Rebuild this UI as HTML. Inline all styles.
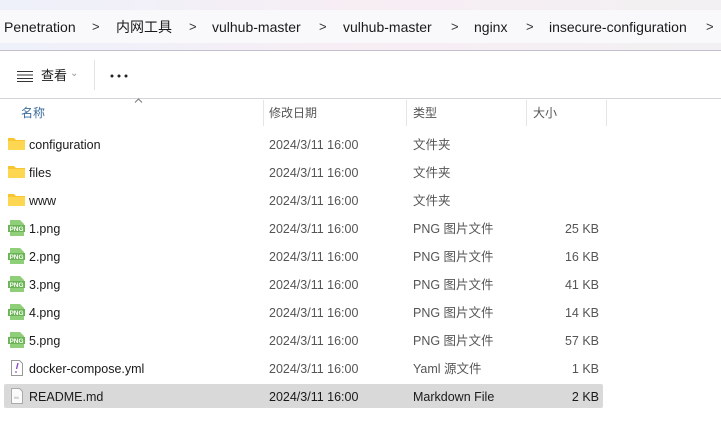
<!DOCTYPE html>
<html><head><meta charset="utf-8"><style>
*{margin:0;padding:0;box-sizing:border-box}
body{width:721px;height:439px;overflow:hidden;background:#fff;font-family:"Liberation Sans","Noto Sans CJK SC",sans-serif;position:relative;color:#1a1a1a}
span{line-height:16px}
.top{position:absolute;left:0;top:0;width:721px;height:51px;background:linear-gradient(90deg,#eef1fa,#f7eef4 50%,#f2f0f2);border-bottom:1px solid #c3bfcc}
.bar{position:absolute;left:0;top:10px;width:721px;height:33px;background:#f9f9fb;font-size:14px;color:#1a1a1a}
.bar span{position:absolute;top:9px;white-space:nowrap}
.bar .c{font-size:13px;color:#333}
.tb{position:absolute;left:0;top:52px;width:721px;height:47px;border-bottom:1px solid #d6d3da}
.a{position:absolute;white-space:nowrap}
.hdr{font-size:12px;color:#3b6b9c;top:105px}
.vs{position:absolute;top:100px;width:1px;height:26px;background:#e5e5e5}
.row{position:absolute;left:0;height:24px;width:721px;font-size:12.5px}
.row span{line-height:16px}
.row .n{position:absolute;left:29px;top:5px;color:#1a1a1a}
.row .d{position:absolute;left:269px;top:5px;color:#555}
.row .t{position:absolute;left:413px;top:5px;color:#555}
.row .s{position:absolute;right:122px;top:5px;color:#555}
.row svg{position:absolute;left:8px;top:4px}
.sel{background:#d9d9d9;left:4px;width:599px;border-radius:2px}
.sel .n{left:25px}.sel .d{left:265px}.sel .t{left:409px}.sel .s{right:4px}.sel svg{left:4px}
.sel .t,.sel .d,.sel .s{color:#1a1a1a}
</style></head><body>
<div class="top"><div class="bar">
<span style="left:4px">Penetration</span><span class="c" style="left:92px">&gt;</span>
<span style="left:116px">内网工具</span><span class="c" style="left:189px">&gt;</span>
<span style="left:212px">vulhub-master</span><span class="c" style="left:319px">&gt;</span>
<span style="left:343px">vulhub-master</span><span class="c" style="left:451px">&gt;</span>
<span style="left:474px">nginx</span><span class="c" style="left:526px">&gt;</span>
<span style="left:549px">insecure-configuration</span><span class="c" style="left:706px">&gt;</span>
</div></div>
<div class="tb">
<svg style="position:absolute;left:17px;top:18px" width="16" height="12"><path d="M0 1.5H16M0 5H16M0 8.5H16M0 11.5H16" stroke="#333" stroke-width="1"/></svg>
<span class="a" style="left:41px;top:16px;font-size:13px">查看</span>
<span class="a" style="left:70px;top:14px;font-size:10px;color:#999">⌄</span>
<div style="position:absolute;left:94px;top:8px;width:1px;height:30px;background:#e3e3e3"></div>
<svg style="position:absolute;left:110px;top:22px" width="18" height="4"><circle cx="2" cy="2" r="1.5" fill="#222"/><circle cx="9" cy="2" r="1.5" fill="#222"/><circle cx="16" cy="2" r="1.5" fill="#222"/></svg>
</div>
<svg style="position:absolute;left:134px;top:98px" width="9" height="5"><path d="M1 4.5L4.5 1L8 4.5" stroke="#777" fill="none"/></svg>
<span class="a hdr" style="left:21px">名称</span>
<span class="a hdr" style="left:269px;color:#555">修改日期</span>
<span class="a hdr" style="left:413px;color:#555">类型</span>
<span class="a hdr" style="left:533px;color:#555">大小</span>
<div class="vs" style="left:263px"></div><div class="vs" style="left:406px"></div><div class="vs" style="left:526px"></div><div class="vs" style="left:606px"></div>

<div class="row" style="top:132px"><svg width="17" height="14"><path d="M0 2h6l2 2h9v10H0z" fill="#f8c430"/><path d="M0 5h17v9H0z" fill="#fdd652"/></svg><span class="n">configuration</span><span class="d">2024/3/11 16:00</span><span class="t">文件夹</span></div>
<div class="row" style="top:160px"><svg width="17" height="14"><path d="M0 2h6l2 2h9v10H0z" fill="#f8c430"/><path d="M0 5h17v9H0z" fill="#fdd652"/></svg><span class="n">files</span><span class="d">2024/3/11 16:00</span><span class="t">文件夹</span></div>
<div class="row" style="top:188px"><svg width="17" height="14"><path d="M0 2h6l2 2h9v10H0z" fill="#f8c430"/><path d="M0 5h17v9H0z" fill="#fdd652"/></svg><span class="n">www</span><span class="d">2024/3/11 16:00</span><span class="t">文件夹</span></div>

<div class="row" style="top:216px"><svg width="17" height="16"><path d="M2 0h10l4 4v12H2z" fill="#8fcf7a"/><rect x="0" y="5" width="17" height="7" fill="#6ab455"/><text x="8.5" y="11" font-size="6.5" fill="#fff" text-anchor="middle" font-family="Liberation Sans" font-weight="bold">PNG</text></svg><span class="n">1.png</span><span class="d">2024/3/11 16:00</span><span class="t">PNG 图片文件</span><span class="s">25 KB</span></div>
<div class="row" style="top:244px"><svg width="17" height="16"><path d="M2 0h10l4 4v12H2z" fill="#8fcf7a"/><rect x="0" y="5" width="17" height="7" fill="#6ab455"/><text x="8.5" y="11" font-size="6.5" fill="#fff" text-anchor="middle" font-family="Liberation Sans" font-weight="bold">PNG</text></svg><span class="n">2.png</span><span class="d">2024/3/11 16:00</span><span class="t">PNG 图片文件</span><span class="s">16 KB</span></div>
<div class="row" style="top:272px"><svg width="17" height="16"><path d="M2 0h10l4 4v12H2z" fill="#8fcf7a"/><rect x="0" y="5" width="17" height="7" fill="#6ab455"/><text x="8.5" y="11" font-size="6.5" fill="#fff" text-anchor="middle" font-family="Liberation Sans" font-weight="bold">PNG</text></svg><span class="n">3.png</span><span class="d">2024/3/11 16:00</span><span class="t">PNG 图片文件</span><span class="s">41 KB</span></div>
<div class="row" style="top:300px"><svg width="17" height="16"><path d="M2 0h10l4 4v12H2z" fill="#8fcf7a"/><rect x="0" y="5" width="17" height="7" fill="#6ab455"/><text x="8.5" y="11" font-size="6.5" fill="#fff" text-anchor="middle" font-family="Liberation Sans" font-weight="bold">PNG</text></svg><span class="n">4.png</span><span class="d">2024/3/11 16:00</span><span class="t">PNG 图片文件</span><span class="s">14 KB</span></div>
<div class="row" style="top:328px"><svg width="17" height="16"><path d="M2 0h10l4 4v12H2z" fill="#8fcf7a"/><rect x="0" y="5" width="17" height="7" fill="#6ab455"/><text x="8.5" y="11" font-size="6.5" fill="#fff" text-anchor="middle" font-family="Liberation Sans" font-weight="bold">PNG</text></svg><span class="n">5.png</span><span class="d">2024/3/11 16:00</span><span class="t">PNG 图片文件</span><span class="s">57 KB</span></div>
<div class="row" style="top:356px"><svg width="17" height="16"><path d="M3.5 0.5h8l3 3v12h-11z" fill="#fff" stroke="#999"/><path d="M10 3l-1.5 6" stroke="#8a4fc9" stroke-width="1.4"/><circle cx="8" cy="12" r="0.9" fill="#8a4fc9"/></svg><span class="n">docker-compose.yml</span><span class="d">2024/3/11 16:00</span><span class="t">Yaml 源文件</span><span class="s">1 KB</span></div>
<div class="row sel" style="top:384px"><svg width="17" height="16"><path d="M3.5 0.5h8l3 3v12h-11z" fill="#fafafa" stroke="#aaa"/><text x="9" y="11" font-size="4" fill="#888" text-anchor="middle" font-family="Liberation Sans">M↓</text></svg><span class="n">README.md</span><span class="d">2024/3/11 16:00</span><span class="t">Markdown File</span><span class="s">2 KB</span></div>
</body></html>
